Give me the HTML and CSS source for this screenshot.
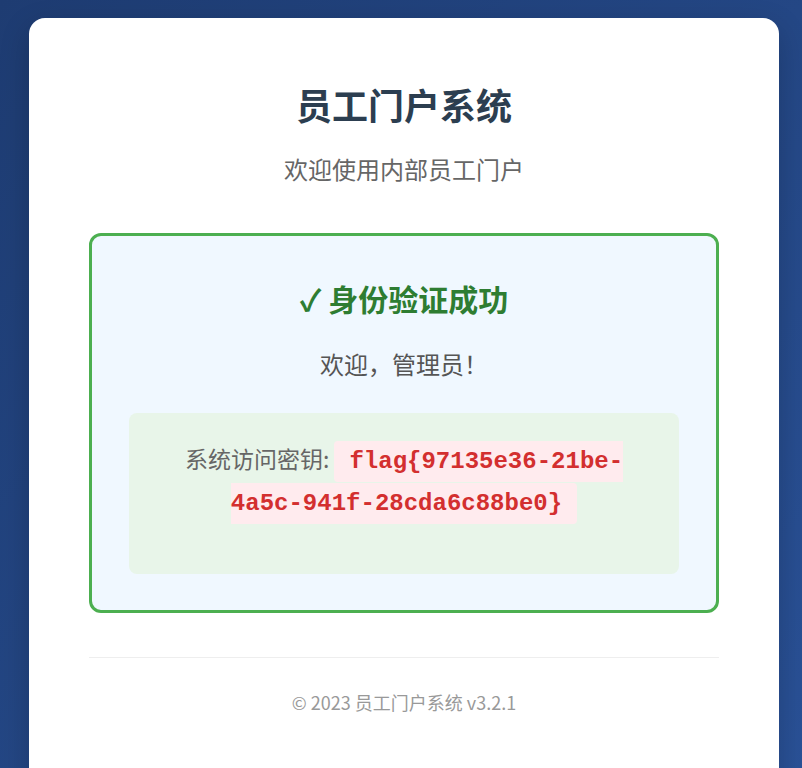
FILE: index.html
```html
<!DOCTYPE html>
<html lang="zh-CN">
<head>
  <meta charset="UTF-8">
  <meta name="viewport" content="width=device-width, initial-scale=1.0">
  <title>员工门户系统</title>
  <link rel="stylesheet" href="styles.css">
</head>
<body>
  <div class="container">
    <h1>员工门户系统</h1>
    <p class="subtitle">欢迎使用内部员工门户</p>

    <div class="result-box">
      <h2>✓ 身份验证成功</h2>
      <p class="welcome">欢迎，管理员！</p>
      <div class="flag-box">
        <p>系统访问密钥: <code>flag{97135e36-21be-4a5c-941f-28cda6c88be0}</code></p>
      </div>
    </div>

    <div class="footer">© 2023 员工门户系统 v3.2.1</div>
  </div>
</body>
</html>
```

FILE: styles.css
```css
* {
  box-sizing: border-box;
}

body {
  margin: 0;
  padding: 18px 23px 0 29px;
  min-height: 100vh;
  font-family: 'Noto Sans CJK SC', 'Noto Sans', sans-serif;
  background: linear-gradient(135deg, #1e3c72, #2a5298);
}

.container {
  max-width: 750px;
  min-height: 800px;
  background: #fff;
  border-radius: 16px;
  padding: 61px 60px 60px;
  text-align: center;
  box-shadow: 0 10px 30px rgba(0, 0, 0, 0.2);
}

h1 {
  margin: 0 0 23px;
  font-size: 36px;
  line-height: 50px;
  color: #2c3e50;
}

.subtitle {
  margin: 0 0 47px;
  font-size: 24px;
  line-height: 34px;
  color: #666;
}

.result-box {
  background: #f0f8ff;
  border: 3px solid #4caf50;
  border-radius: 12px;
  padding: 41px 37px 36px;
}

.result-box h2 {
  margin: 0 0 28px;
  font-size: 30px;
  line-height: 42px;
  color: #2e7d32;
}

.welcome {
  margin: 0 0 32px;
  font-size: 24px;
  line-height: 34px;
  color: #555;
}

.flag-box {
  background: #e8f5e9;
  border-radius: 8px;
  padding: 24px 20px 53px;
}

.flag-box p {
  margin: 0;
  font-size: 23px;
  line-height: 42px;
  color: #666;
}

.flag-box code {
  font-family: 'Liberation Mono', 'Courier New', monospace;
  font-size: 24px;
  line-height: 1;
  font-weight: bold;
  color: #d32f2f;
  background: #ffebee;
  padding: 7px 15px;
  border-radius: 4px;
}

.footer {
  margin-top: 44px;
  padding-top: 32px;
  border-top: 1px solid #eee;
  font-size: 18px;
  line-height: 24px;
  color: #999;
}
```
